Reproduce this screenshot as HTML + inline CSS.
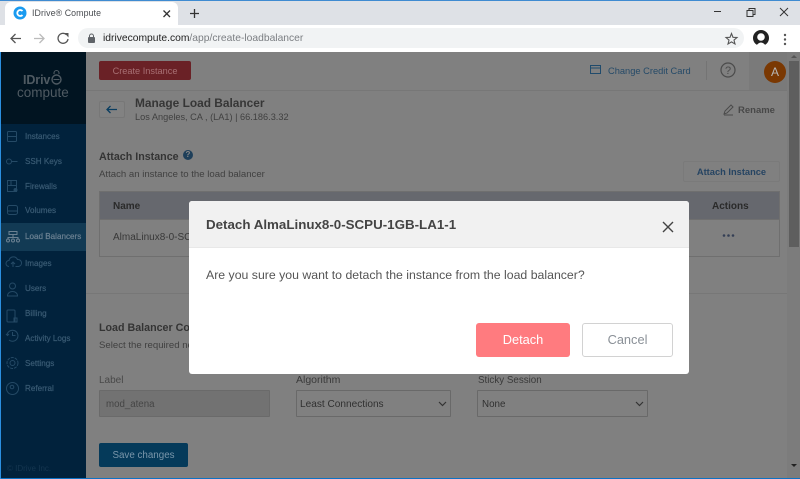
<!DOCTYPE html>
<html><head><meta charset="utf-8"><style>
html,body{margin:0;padding:0;background:#808080}
#p{width:800px;height:479px;overflow:hidden;position:relative;background:#808080;font-family:"Liberation Sans",sans-serif;filter:blur(.3px)}
body{width:800px;height:479px;overflow:hidden}
.a{position:absolute;white-space:nowrap}
.b{position:absolute;box-sizing:border-box}
.nav{position:absolute;left:25px;font-size:8.1px;-webkit-text-stroke:.2px #3a5b74;color:#3a5b74;white-space:nowrap;line-height:12px;margin-top:1px}
svg{position:absolute;overflow:visible}
.ni{fill:none;stroke:#254a66;stroke-width:1}
</style></head><body><div id="p">
<!-- browser chrome -->
<div class="b" style="left:0;top:0;width:800px;height:26px;background:#dee1e6"></div>
<div class="b" style="left:0;top:0;width:800px;height:1px;background:#3f8bd1"></div>
<div class="b" style="left:5px;top:2px;width:173px;height:24px;background:#fff;border-radius:6px 6px 0 0"></div>
<svg style="left:13px;top:6px" width="16" height="16"><circle cx="7" cy="7" r="6.5" fill="#1a9bf0"/><path d="M9.5 5A3 3 0 1 0 9.5 9" fill="none" stroke="#fff" stroke-width="1.8"/></svg>
<div class="a" style="left:32px;top:7px;font-size:8.8px;line-height:13px;color:#4a4d51;letter-spacing:.1px">IDrive® Compute</div>
<svg style="left:162px;top:9px" width="10" height="10"><path d="M1.5 1.5L8 8M8 1.5L1.5 8" stroke="#333" stroke-width="1.3"/></svg>
<svg style="left:189px;top:8px" width="12" height="12"><path d="M5.5 1V10M1 5.5H10" stroke="#333" stroke-width="1.3"/></svg>
<svg style="left:713px;top:5px" width="80" height="16"><path d="M1 6.5H8" stroke="#333"/><path d="M34 5.5h6v6h-6zM36 5.5v-2h6v6h-2" fill="none" stroke="#333"/><path d="M67 3L75 11M75 3L67 11" stroke="#333"/></svg>
<div class="b" style="left:0;top:25px;width:800px;height:27px;background:#fff"></div>
<div class="b" style="left:78px;top:28px;width:666px;height:20px;background:#f1f3f4;border-radius:10px"></div>
<svg style="left:9px;top:31px" width="70" height="16"><path d="M2 7.5H12M6.5 3L2 7.5L6.5 12" fill="none" stroke="#555" stroke-width="1.3"/><path d="M25 7.5H35M30.5 3L35 7.5L30.5 12" fill="none" stroke="#bbb" stroke-width="1.3"/><path d="M57.5 3.7A5 5 0 1 0 59 8" fill="none" stroke="#555" stroke-width="1.3"/><path d="M55.5 2L59.5 2V6.5Z" fill="#555"/></svg>
<svg style="left:87px;top:33px" width="10" height="11"><rect x="1" y="4" width="7" height="6" rx="1" fill="#5f6368"/><path d="M2.5 4.500V3a2 2 0 0 1 4 0v1.500" fill="none" stroke="#5f6368"/></svg>
<div class="a" style="left:103px;top:32px;font-size:10.300px;line-height:14px;color:#7b7e82"><span style="color:#222">idrivecompute.com</span>/app/create-loadbalancer</div>
<svg style="left:725px;top:32px" width="14" height="14"><path d="M6.5 1.5L8 5.3L12 5.5L9 8.1L10 12L6.5 9.9L3 12L4 8.1L1 5.5L5 5.3Z" fill="none" stroke="#555" stroke-width="1.1"/></svg>
<svg style="left:753px;top:30px" width="17" height="17"><circle cx="8" cy="8" r="8" fill="#222"/><circle cx="8" cy="7" r="3.8" fill="#fff"/><path d="M3 16Q8 9 13 16" fill="#fff"/></svg>
<svg style="left:783px;top:33px" width="5" height="13"><circle cx="2" cy="2" r="1.2" fill="#555"/><circle cx="2" cy="6.5" r="1.2" fill="#555"/><circle cx="2" cy="11" r="1.2" fill="#555"/></svg>

<!-- sidebar -->
<div class="b" style="left:0;top:52px;width:1px;height:427px;background:#2b8fe0"></div>
<div class="b" style="left:1px;top:52px;width:85px;height:72px;background:#011421"></div>
<div class="b" style="left:1px;top:124px;width:85px;height:355px;background:#01223c"></div>
<div class="b" style="left:1px;top:223px;width:85px;height:28px;background:#123a54"></div>
<div class="a" style="left:23px;top:72px;font-size:12.500px;font-weight:bold;line-height:16px;color:#4f5a62;letter-spacing:-.1px">IDriv</div>
<svg style="left:50px;top:69px" width="16" height="18"><circle cx="6.5" cy="10.500" r="4.500" fill="none" stroke="#4f5a62" stroke-width="1.400"/><path d="M3.500 10.500H9.500M4 5V4a2.500 2.500 0 0 1 5 0V5" fill="none" stroke="#4f5a62" stroke-width="1.100"/></svg>
<div class="a" style="left:17px;top:85px;font-size:13.500px;line-height:16px;color:#4f5a62">compute</div>

<div class="nav" style="top:130px">Instances</div>
<div class="nav" style="top:155px">SSH Keys</div>
<div class="nav" style="top:180px">Firewalls</div>
<div class="nav" style="top:204px">Volumes</div>
<div class="nav" style="top:230px;color:#6b8192;-webkit-text-stroke:.2px #6b8192">Load Balancers</div>
<div class="nav" style="top:257px">Images</div>
<div class="nav" style="top:282px">Users</div>
<div class="nav" style="top:307px">Billing</div>
<div class="nav" style="top:332px">Activity Logs</div>
<div class="nav" style="top:357px">Settings</div>
<div class="nav" style="top:382px">Referral</div>
<div class="a" style="left:7px;top:463px;font-size:8px;line-height:11px;color:#153650">© IDrive Inc.</div>

<svg class="ni" style="left:0;top:120px" width="20" height="290">
<rect x="7.500" y="11.500" width="9" height="10" rx="1"/><path d="M7.500 16.500h9"/>
<circle cx="9" cy="41.500" r="2.500"/><path d="M11.500 41.500h6"/>
<rect x="7.500" y="60.500" width="9" height="11"/><path d="M7.500 65.500h9M11 60.500v5"/><circle cx="15.500" cy="70" r="1.500" fill="#254a66"/>
<rect x="7.500" y="85.500" width="10" height="9" rx="2"/><path d="M7.500 91h10"/>
<g stroke="#6b8192"><path d="M9 111.500h8v3h-8zM13 114.500v3M8 119v-1.500h10v1.500"/><circle cx="8" cy="120.500" r="1.500"/><circle cx="13" cy="120.500" r="1.500"/><circle cx="18" cy="120.500" r="1.500"/></g>
<path d="M9 146.500a3 3 0 0 1 0-6a4.500 4.500 0 0 1 8.500-1a3.500 3.500 0 0 1 1 7h-3M13 147v-5M11 144l2-2l2 2"/>
<circle cx="12.500" cy="166" r="3"/><path d="M7.500 176c0-6 10-6 10 0z"/>
<rect x="7" y="190" width="8" height="12" rx="1"/><rect x="14" y="198" width="3" height="4"/>
<path d="M7 215a5.500 5.500 0 1 1 2 5M12.500 212v3.500h3M6 214l1.500 1.500L9 214"/>
<circle cx="12.500" cy="243" r="2.500"/><circle cx="12.500" cy="243" r="5.500" stroke-dasharray="3 1"/>
<circle cx="12.500" cy="268.500" r="6"/><circle cx="12" cy="267" r="1.800"/>
</svg>

<!-- topbar -->
<div class="b" style="left:86px;top:90px;width:701px;height:1px;background:#777"></div>
<div class="b" style="left:749px;top:52px;width:38px;height:38px;background:#7a7a7a"></div>
<div class="b" style="left:99px;top:61px;width:92px;height:19px;background:#6a2126;border-radius:2px"></div>
<div class="a" style="left:99px;top:65px;width:92px;text-align:center;font-size:9.200px;line-height:13px;color:#a87074">Create Instance</div>
<svg style="left:590px;top:65px" width="12" height="11"><rect x=".5" y=".5" width="10" height="8" fill="none" stroke="#204b6c"/><path d="M.5 3H10.500" stroke="#204b6c"/></svg>
<div class="a" style="left:608px;top:65px;font-size:9.300px;line-height:13px;color:#254a68">Change Credit Card</div>
<div class="b" style="left:706px;top:61px;width:1px;height:19px;background:#747474"></div>
<svg style="left:720px;top:62px" width="16" height="16"><circle cx="8" cy="8" r="7" fill="none" stroke="#4b4b4b" stroke-width="1.200"/><text x="8" y="12" font-size="11" text-anchor="middle" fill="#4b4b4b" font-family="Liberation Sans">?</text></svg>
<div class="b" style="left:764px;top:61px;width:22px;height:22px;border-radius:50%;background:#7a3802"></div>
<div class="a" style="left:764px;top:65px;width:22px;text-align:center;font-size:12px;line-height:14px;color:#b8b8b8">A</div>
<!-- scrollbar -->
<div class="b" style="left:787px;top:52px;width:13px;height:427px;background:#7c7c7c"></div>
<div class="b" style="left:789px;top:61px;width:10px;height:186px;background:#5e5e5e"></div>
<svg style="left:789px;top:52px" width="10" height="426"><path d="M2 6L5 3L8 6Z" fill="#555"/><path d="M2 412L5 415L8 412Z" fill="#222"/></svg>

<!-- header -->
<div class="b" style="left:99px;top:101px;width:26px;height:17px;border:1px solid #777;border-radius:2px;background:#828282"></div>
<svg style="left:106px;top:105px" width="13" height="9"><path d="M1 4.500H11M4.500 1L1 4.500L4.500 8" fill="none" stroke="#0a3d60" stroke-width="1.300"/></svg>
<div class="a" style="left:135px;top:95px;font-size:11.900px;font-weight:bold;line-height:16px;color:#363636">Manage Load Balancer</div>
<div class="a" style="left:135px;top:111px;font-size:9.200px;line-height:13px;color:#404040">Los Angeles, CA , (LA1) | 66.186.3.32</div>
<svg style="left:723px;top:104px" width="12" height="12"><path d="M1 10L2 7L8 1L10 3L4 9ZM1 11H10" fill="none" stroke="#4a4a4a"/></svg>
<div class="a" style="left:738px;top:104px;font-size:9.500px;font-weight:bold;line-height:13px;color:#484848">Rename</div>

<!-- attach section -->
<div class="a" style="left:99px;top:150px;font-size:10.700px;font-weight:bold;line-height:15px;color:#343434">Attach Instance</div>
<div class="b" style="left:183px;top:150px;width:10px;height:10px;border-radius:50%;background:#1e3f5a"></div>
<div class="a" style="left:183px;top:150px;width:10px;text-align:center;font-size:8px;font-weight:bold;line-height:10px;color:#888">?</div>
<div class="a" style="left:99px;top:168px;font-size:9.600px;line-height:13px;color:#404040">Attach an instance to the load balancer</div>
<div class="b" style="left:683px;top:161px;width:97px;height:21px;border:1px solid #7a7a7a;border-radius:2px"></div>
<div class="a" style="left:683px;top:166px;width:97px;text-align:center;font-size:9.300px;font-weight:bold;line-height:13px;color:#264462">Attach Instance</div>
<div class="b" style="left:99px;top:191px;width:681px;height:66px;border:1px solid #6f6f6f;background:#808080"></div>
<div class="b" style="left:100px;top:192px;width:679px;height:27px;background:#66686e"></div>
<div class="b" style="left:100px;top:219px;width:679px;height:1px;background:#6f6f6f"></div>
<div class="a" style="left:113px;top:200px;font-size:10px;font-weight:bold;line-height:13px;color:#2a2a2a">Name</div>
<div class="a" style="left:712px;top:200px;font-size:10px;font-weight:bold;line-height:13px;color:#2a2a2a">Actions</div>
<div class="a" style="left:113px;top:231px;font-size:10px;line-height:13px;color:#383838">AlmaLinux8-0-SCPU</div>
<svg style="left:722px;top:233px" width="14" height="5"><circle cx="2" cy="2.5" r="1.3" fill="#343f55"/><circle cx="6.5" cy="2.5" r="1.3" fill="#343f55"/><circle cx="11" cy="2.5" r="1.3" fill="#343f55"/></svg>
<div class="b" style="left:86px;top:293px;width:701px;height:1px;background:#777"></div>

<!-- config -->
<div class="a" style="left:99px;top:321px;font-size:10.700px;font-weight:bold;line-height:15px;color:#343434">Load Balancer Configuration</div>
<div class="a" style="left:99px;top:339px;font-size:9.600px;line-height:13px;color:#404040">Select the required network</div>
<div class="a" style="left:99px;top:374px;font-size:10px;line-height:13px;color:#484848">Label</div>
<div class="a" style="left:296px;top:374px;font-size:10.500px;line-height:13px;color:#3a3a3a">Algorithm</div>
<div class="a" style="left:478px;top:374px;font-size:9.800px;line-height:13px;color:#3a3a3a">Sticky Session</div>
<div class="b" style="left:99px;top:390px;width:171px;height:27px;background:#727272;border:1px solid #6a6a6a;border-radius:1px"></div>
<div class="a" style="left:106px;top:398px;font-size:9.700px;line-height:13px;color:#454545">mod_atena</div>
<div class="b" style="left:296px;top:390px;width:155px;height:27px;border:1px solid #696969;border-radius:1px"></div>
<div class="a" style="left:300px;top:398px;font-size:10.100px;line-height:13px;color:#303030">Least Connections</div>
<div class="b" style="left:477px;top:390px;width:171px;height:27px;border:1px solid #696969;border-radius:1px"></div>
<div class="a" style="left:482px;top:398px;font-size:9.800px;line-height:13px;color:#303030">None</div>
<svg style="left:438px;top:401px" width="9" height="6"><path d="M1 1L4.500 4.500L8 1" fill="none" stroke="#333" stroke-width="1.2"/></svg>
<svg style="left:635px;top:401px" width="9" height="6"><path d="M1 1L4.500 4.500L8 1" fill="none" stroke="#333" stroke-width="1.2"/></svg>
<div class="b" style="left:99px;top:443px;width:89px;height:24px;background:#053a5a;border-radius:2px"></div>
<div class="a" style="left:99px;top:449px;width:89px;text-align:center;font-size:9.800px;line-height:14px;color:#7a96aa">Save changes</div>
<div class="b" style="left:1px;top:478px;width:799px;height:1px;background:#0d72c4"></div>

<!-- modal -->
<div class="b" style="left:189px;top:201px;width:500px;height:173px;background:#fff;border-radius:3px;overflow:hidden">
<div style="height:46px;background:#f1f1f1;border-bottom:1px solid #e8e8e8"></div>
</div>
<div class="a" style="left:206px;top:216px;font-size:13.350px;font-weight:bold;line-height:18px;color:#444">Detach AlmaLinux8-0-SCPU-1GB-LA1-1</div>
<svg style="left:662px;top:221px" width="12" height="12"><path d="M1 1L11 11M11 1L1 11" stroke="#444" stroke-width="1.4"/></svg>
<div class="a" style="left:206px;top:267px;font-size:12.300px;line-height:16px;color:#555">Are you sure you want to detach the instance from the load balancer?</div>
<div class="b" style="left:476px;top:323px;width:94px;height:34px;background:#ff7b7f;border-radius:3px"></div>
<div class="a" style="left:476px;top:332px;width:94px;text-align:center;font-size:12.800px;line-height:16px;color:#fff">Detach</div>
<div class="b" style="left:582px;top:323px;width:91px;height:34px;background:#fff;border:1px solid #d2d2d2;border-radius:3px"></div>
<div class="a" style="left:582px;top:332px;width:91px;text-align:center;font-size:12.800px;line-height:16px;color:#8a9097">Cancel</div>
</div></body></html>
